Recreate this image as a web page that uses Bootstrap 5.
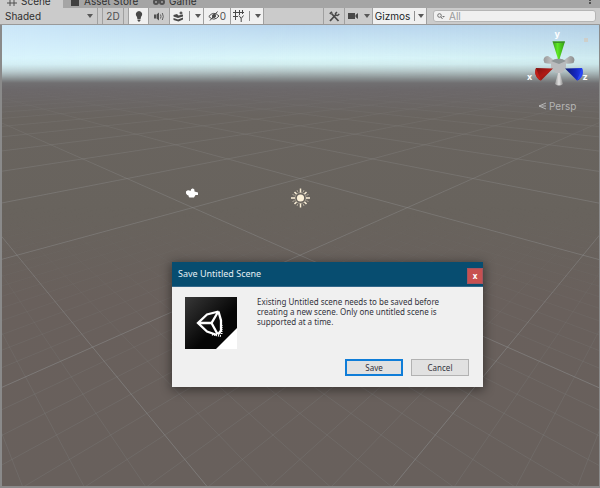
<!DOCTYPE html>
<html lang="en">
<head>
<meta charset="utf-8">
<meta name="viewport" content="width=device-width, initial-scale=1">
<title>Scene</title>
<link href="https://cdn.jsdelivr.net/npm/bootstrap@5.3.0/dist/css/bootstrap.min.css" rel="stylesheet">
<style>
body{font-family:Inter,"Liberation Sans",sans-serif;font-size:10px;line-height:14px;color:#303030;background:#8a8a8a}
button,select,input{font:inherit}
svg{display:block;flex:none}
.tabs{height:8px;background:#a5a5a5;align-items:flex-end}
.tab{height:14px;border:0;background:none;color:#303030;padding:0 0 0 7px;gap:4px;line-height:14px;overflow:visible}
.tab.active{background:#cbcbcb;width:63px}
.tab.store{width:83px}
.toolbar{height:17px;background:#cbcbcb;border-bottom:1px solid #999;padding-left:2px;color:#303030}
.tool{height:16px;border:0;border-right:1px solid #a0a0a0;background:none;color:#505050;padding:0;border-radius:0}
.tool.on{background:#f0f0f0}
.w20{width:20px}.w21{width:21px}.w27{width:27px}.w28{width:28px}.w33{width:33px}.w34{width:34px}.w54{width:54px}
.shade{width:96px;border-right:1px solid #a0a0a0}
.shade select{appearance:none;border:0;background:none;padding:0 0 0 3px;width:100%;height:16px;color:#303030;line-height:16px}
.shade svg{margin-left:-10px;margin-right:4px;pointer-events:none}
.gap1{width:5px;height:16px;border-right:1px solid #a0a0a0}
.bar{width:1px;height:10px;background:#909090}
.search{width:163px;height:12px;margin:0 4px 0 6px;background:#f0f0f0;border:1px solid #b5b5b5;border-radius:3px;padding-left:3px;gap:4px}
.search input{border:0;background:none;outline:0;padding:0;width:100%;height:10px;line-height:10px;color:#666}
.search input::placeholder{color:#999;opacity:1}
.scene{min-height:calc(100vh - 25px);border:solid #8a8a8a;border-width:0 1px 2px 2px;overflow:hidden;background:#69625d}
.world{position:absolute;inset:0;width:100%;height:100%}
.gizmo{position:absolute;right:5px;top:6px;width:72px}
.persp{color:#b5b5b5;border:0;background:none;padding:0;gap:3px;margin:7px 0 0 16px}
.dialog-win{position:absolute;left:170px;top:237px;width:311px;background:#f0f0f0;box-shadow:0 2px 10px 1px rgba(0,0,0,.45);font-family:"Noto Sans","Open Sans",sans-serif}
.dialog-title{height:25px;background:#074d70;border-bottom:1px solid #34688a;color:#e3edf3;font-size:9px;padding-left:6px;line-height:12px}
.dialog-close{width:16px;height:16px;background:#c75050;border:1px solid #a5535e;color:#fff;padding:0;font-size:8px;font-weight:700;line-height:9px;margin:3px 0 0}
.dialog-text{padding:10px 14px 10px 13px;gap:20px}
.msg{font-size:8px;line-height:10px;color:#32323c;margin:0}
.acts{padding:0 14px 11px;gap:8px}
.act{width:58px;height:17px;background:#e1e1e1;border:1px solid #b2b2b2;color:#32323c;padding:0;font-size:8px;line-height:12px}
.act.main{border:2px solid #0f7dd8}
</style>
<script src="https://cdn.jsdelivr.net/npm/bootstrap@5.3.0/dist/js/bootstrap.bundle.min.js"></script>
</head>
<body>
<svg width="0" height="0" class="position-absolute" aria-hidden="true"><symbol id="caret" viewBox="0 0 6 4"><path d="M0 0h6L3 4z" fill="#585858"/></symbol></svg>
<nav class="tabs d-flex overflow-hidden" aria-label="Views">
  <button class="tab active d-flex align-items-center"><svg width="10" height="10" viewBox="0 0 10 10" stroke="#505050"><path d="M3 0v10M7 0v10M0 3h10M0 7h10"/></svg>Scene</button>
  <button class="tab store d-flex align-items-center"><svg width="10" height="10" viewBox="0 0 10 10"><path d="M1 3h8v7H1z" fill="#404040"/><path d="M3 4V1h4v3" fill="none" stroke="#404040"/></svg>Asset Store</button>
  <button class="tab d-flex align-items-center"><svg width="12" height="10" viewBox="0 0 12 10" fill="none" stroke="#505050" stroke-width="2"><circle cx="3" cy="6" r="2"/><circle cx="9" cy="6" r="2"/><path d="M3 4h6"/></svg>Game</button>
  <svg class="ms-auto me-2" width="4" height="8" viewBox="0 0 4 8" fill="#505050"><path d="M1 0h2v1H1zM1 2h2v2H1z"/></svg>
</nav>
<div class="toolbar d-flex" role="toolbar" aria-label="Scene tools">
  <div class="shade d-flex align-items-center"><select aria-label="Draw mode"><option>Shaded</option></select><svg width="6" height="4"><use href="#caret"/></svg></div>
  <div class="gap1"></div>
  <button class="tool w21">2D</button>
  <div class="gap1"></div>
  <button class="tool on w20 d-flex align-items-center justify-content-center" aria-label="Lighting"><svg width="8" height="11" viewBox="0 0 8 11"><path d="M4 0a3.4 3.4 0 0 1 2 6L5.600 8H2.400L2 6a3.400 3.400 0 0 1 2-6zM2.500 8.500h3v1L4 11 2.500 9.500z" fill="#484848"/></svg></button>
  <button class="tool w21 d-flex align-items-center justify-content-center" aria-label="Audio"><svg width="12" height="9" viewBox="0 0 12 9"><path d="M1 2.500h2v4H1zM3.500 2.500 6 .5v8l-2.500-2z" fill="#505050"/><path d="M7.500 2.500q1 2 0 4M9.300 1q2 3.500 0 7" fill="none" stroke="#606060"/></svg></button>
  <button class="tool on w34 d-flex align-items-center justify-content-around" aria-label="Effects"><svg width="11" height="11" viewBox="0 0 11 11"><path d="M.5 4 4 3l1.500 1.500L10 3.500V5.500L5 7 .5 5.500zM.5 7 5 8.500l5-2v2L5.500 10.500.5 9zM8 0l.7 1.300L10 2l-1.300.7L8 4l-.7-1.300L6 2l1.300-.7z" fill="#484848"/></svg><span class="bar"></span><svg width="6" height="4"><use href="#caret"/></svg></button>
  <button class="tool on w27 d-flex align-items-center justify-content-center" aria-label="Hidden objects: 0"><svg width="12" height="10" viewBox="0 0 12 10" fill="none" stroke="#484848"><path d="M.8 5.500Q5.500-.5 11 5q-5 6-10.200.5zM2 9.500 9.500.5"/><circle cx="6" cy="5" r="1.500" fill="#484848"/></svg>0</button>
  <button class="tool on w33 d-flex align-items-center justify-content-around" aria-label="Grid"><svg width="12" height="12" viewBox="0 0 12 12" fill="none" stroke="#484848"><path d="M2.500 0v10M6.500 0v5M0 2.500h11M0 6.500h5M9.500 0v4M6 5.500l2.200 3 2.300-3M8.200 8.500V12"/></svg><span class="bar"></span><svg width="6" height="4"><use href="#caret"/></svg></button>
  <div class="tool flex-grow-1"></div>
  <button class="tool w21 d-flex align-items-center justify-content-center" aria-label="Tools"><svg width="11" height="11" viewBox="0 0 11 11" fill="none" stroke="#484848"><path d="m2.500 2.500 7 7.500" stroke-width="1.800"/><path d="M.8 2.800 3 .8M1 10l5.500-6" stroke-width="1.800"/><path d="M8 1 6.500 2.500l.3 1.700 1.700.3L10.300 3" stroke-width="1.500"/></svg></button>
  <button class="tool w28 d-flex align-items-center justify-content-around" aria-label="Camera"><svg width="11" height="8" viewBox="0 0 11 8"><path d="M0 1h7v6H0zM7.500 3 10 1v6L7.500 5z" fill="#484848"/></svg><svg width="6" height="4"><use href="#caret"/></svg></button>
  <button class="tool on w54 d-flex align-items-center justify-content-around text-dark">Gizmos<span class="bar"></span><svg width="6" height="4"><use href="#caret"/></svg></button>
  <label class="search d-flex align-items-center align-self-center"><svg width="8" height="7" viewBox="0 0 8 7" fill="none" stroke="#707070"><circle cx="2.500" cy="2.500" r="1.800"/><path d="m4 4 1.500 2"/><path d="M5 3h3L6.500 4.500z" fill="#707070" stroke="none"/></svg><input type="text" placeholder="All" aria-label="Search scene"></label>
</div>
<main class="scene position-relative">
  <svg class="world" viewBox="2 25 597 461" preserveAspectRatio="xMidYMin slice" aria-hidden="true">
    <defs>
      <linearGradient id="sky" gradientUnits="userSpaceOnUse" x1="0" y1="25" x2="0" y2="486">
        <stop offset="0" stop-color="#b9d6ee"/><stop offset=".035" stop-color="#c9e5f4"/><stop offset=".072" stop-color="#daf6f9"/><stop offset=".085" stop-color="#d2edef"/><stop offset=".1" stop-color="#b4c5c6"/><stop offset=".115" stop-color="#8b9293"/><stop offset=".126" stop-color="#706f71"/><stop offset=".14" stop-color="#6c686a"/><stop offset=".2" stop-color="#69645f"/><stop offset=".4" stop-color="#68635d"/><stop offset=".6" stop-color="#69605c"/><stop offset="1" stop-color="#68605c"/>
      </linearGradient>
      <linearGradient id="side"><stop offset="0" stop-color="#d8f2ff" stop-opacity=".6"/><stop offset=".5" stop-color="#d0eeff" stop-opacity="0"/><stop offset="1" stop-color="#9cb8c8" stop-opacity=".2"/></linearGradient>
      <linearGradient id="skyFade" x2="0" y2="1"><stop offset=".5" stop-color="#fff"/><stop offset="1" stop-color="#fff" stop-opacity="0"/></linearGradient>
      <linearGradient id="fade" gradientUnits="userSpaceOnUse" x1="0" y1="85" x2="0" y2="200"><stop offset="0" stop-color="#fff" stop-opacity="0"/><stop offset=".3" stop-color="#fff" stop-opacity=".4"/><stop offset="1" stop-color="#fff"/></linearGradient>
      <linearGradient id="fadeFine" gradientUnits="userSpaceOnUse" x1="0" y1="205" x2="0" y2="400"><stop offset="0" stop-color="#fff" stop-opacity="0"/><stop offset="1" stop-color="#fff"/></linearGradient>
      <mask id="upper" maskUnits="userSpaceOnUse" x="0" y="25" width="600" height="57"><path d="M0 25h600v57H0z" fill="url(#skyFade)"/></mask>
      <mask id="far" maskUnits="userSpaceOnUse" x="0" y="25" width="600" height="463"><path d="M0 85h600v403H0z" fill="url(#fade)"/></mask>
      <mask id="near" maskUnits="userSpaceOnUse" x="0" y="25" width="600" height="463"><path d="M0 205h600v283H0z" fill="url(#fadeFine)"/></mask>
    </defs>
    <path d="M0 25h600v463H0z" fill="url(#sky)"/>
    <g mask="url(#upper)"><path d="M0 25h600v57H0z" fill="url(#side)"/></g>
    <g mask="url(#near)"><path id="fine" fill="none" stroke="#85898a" stroke-opacity=".24"/></g>
    <g mask="url(#far)"><path id="coarse" fill="none" stroke="#909090" stroke-opacity=".4"/></g>
    <path d="M186 191.500q2-2 4.500-.5.300-3 2.500-2.500 2 .5 1.500 3l3.500 1v2.500h-2.500l-1.500 2.500h-4.500q-1-.5-1-2-3-1-2.500-4z" fill="#fff"/>
    <g stroke="#fbf0d8" fill="#fbf0d8"><circle cx="300.500" cy="198" r="3.600" stroke="none"/><circle cx="300.500" cy="198" r="5.500" fill="none" stroke-width=".8" stroke-opacity=".45"/><path d="M300.500 188.500v4M300.500 203.500v4M291 198h4M306 198h4M294.500 192l2 2M304.500 202l2 2M306.500 192l-2 2M296.500 202l-2 2" stroke-width="1.500"/><path d="M297 190l.8 2M304 190l-.8 2M297 206l.8-2M304 206l-.8-2M292.500 194.500l2 .8M308.500 194.500l-2 .8M292.500 201.500l2-.8M308.500 201.500l-2-.8" stroke-width=".8" stroke-opacity=".6"/></g>
  </svg>
  <div class="gizmo">
    <svg width="72" height="61" viewBox="522 31 72 61" role="img" aria-label="Orientation x y z">
      <defs><linearGradient id="gr"><stop offset="0" stop-color="#3a9a1c"/><stop offset=".4" stop-color="#5de825"/><stop offset="1" stop-color="#2f9a10"/></linearGradient>
      <linearGradient id="rd" x2="1" y2="1"><stop offset="0" stop-color="#7a1010"/><stop offset=".5" stop-color="#b01a14"/><stop offset="1" stop-color="#5a0c08"/></linearGradient>
      <linearGradient id="bl"><stop offset="0" stop-color="#0c1a70"/><stop offset=".6" stop-color="#1426c0"/><stop offset="1" stop-color="#2440f0"/></linearGradient>
      <linearGradient id="gy"><stop offset="0" stop-color="#999"/><stop offset=".5" stop-color="#e2e2e2"/><stop offset="1" stop-color="#8c8c8c"/></linearGradient></defs>
      <path d="M554 60l-6-4q-4 0-4.500 4l1 3q4 1 8.500.5zM564 60l6-4q4 0 4.500 4l-1 3q-4 1-8.500.5z" fill="url(#gy)"/>
      <path d="M551 61q8-5 15 0v7l-4 5h-6l-5-5z" fill="#b9bbbd"/><path d="M551 61q8-5 15 0l-7 3z" fill="#8f9698"/>
      <path d="M558 73h2l3 11q-4 3-8 0z" fill="url(#gy)"/>
      <path d="M552.500 41.500h12.500L559.500 59h-1.500z" fill="url(#gr)"/><path d="M552.500 41.500h12.500l-1 1.500h-10z" fill="#3d8f28"/>
      <path d="M553 68.500 536 68q-2 5 1 9.500 2 3 4 3z" fill="url(#rd)"/><path d="M536 68q-2 5 1 9.500l4 3z" fill="#c02018"/>
      <path d="M565 68.500 582 68q2 5-1 9.500-2 3-4 3z" fill="url(#bl)"/><path d="M582 68q2 5-1 9.500l-4 3z" fill="#2846f4"/>
      <path d="M584 38h4v4h-4z" fill="#d3c9bc" opacity=".7"/>
      <g fill="#fff" font-size="9" font-weight="700" font-family="Inter"><text x="554.500" y="37">y</text><text x="527" y="80">x</text><text x="582.500" y="80">z</text></g>
    </svg>
    <button class="persp d-flex align-items-center"><svg width="8" height="8" viewBox="0 0 8 8" fill="none" stroke="#b5b5b5"><path d="M8 1 1 4l7 3M1 4h7"/></svg>Persp</button>
  </div>
  <section class="dialog-win" role="dialog" aria-labelledby="dlgTitle">
    <header class="dialog-title d-flex align-items-center justify-content-between"><span id="dlgTitle">Save Untitled Scene</span><button class="dialog-close" aria-label="Close">x</button></header>
    <div class="dialog-text d-flex">
      <svg width="52" height="52" viewBox="0 0 52 52" aria-hidden="true"><defs><linearGradient id="lg" x2="1" y2="1"><stop offset="0" stop-color="#383838"/><stop offset=".6" stop-color="#050505"/></linearGradient></defs><path d="M0 0h52v52H0z" fill="url(#lg)"/><path d="M52 31v21H31z" fill="#fff"/><path d="M33.500 14.500 22 17.500 13 26l9 8.500 10 3.500M33.500 14.500l2.500 9v10l-3 4M14 26h12.500l6.500-11M26.500 26l6 11" fill="none" stroke="#fff" stroke-width="2.300"/><path d="M27 37.500l9 1.500M36.500 28v10" stroke="#fff" stroke-width="2" stroke-dasharray="1 1"/></svg>
      <p class="msg">Existing Untitled scene needs to be saved before<br>creating a new scene. Only one untitled scene is<br>supported at a time.</p>
    </div>
    <footer class="acts d-flex justify-content-end"><button class="act main">Save</button><button class="act">Cancel</button></footer>
  </section>
</main>
<script>
// Floor grid: two families of parallel lines, each meeting at its own point on the horizon.
const horizon = 58, bottom = 490, slope = 1.435;
function gridPath(step, count) {
  let d = "";
  for (let i = 0; i < count; i++) {
    const run = slope * (0.5725 - (step < 1 ? 0.5 : 0) + i * step) * (bottom - horizon);
    d += `M745 ${horizon}L${745 - run} ${bottom}M-145 ${horizon}L${-145 + run} ${bottom}`;
  }
  return d;
}
document.getElementById("coarse").setAttribute("d", gridPath(1, 26));
document.getElementById("fine").setAttribute("d", gridPath(0.1, 60));
</script>
</body>
</html>
